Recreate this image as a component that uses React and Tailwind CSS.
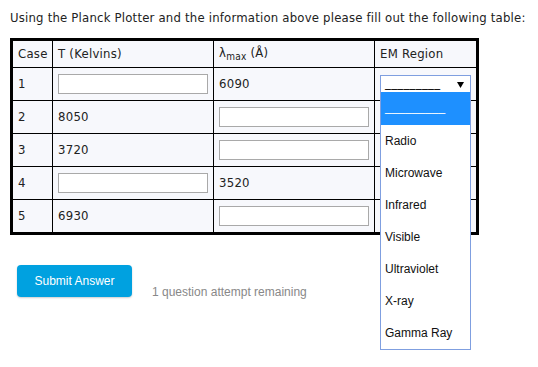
import React from "react";

const verdana = { fontFamily: '"DejaVu Sans Condensed", "DejaVu Sans", Verdana, sans-serif', fontStretch: "condensed" };

function Cell({ children, className = "" }) {
  return (
    <div className={"bg-[#f7f8fc] flex items-center pl-[5px] text-[13px] tracking-[0.25px] text-[#222] " + className}>
      {children}
    </div>
  );
}

function Input() {
  return <div className="w-[150px] h-[20px] bg-white border border-[#a9a9a9]" />;
}

export default function App() {
  const rows = [
    { c: "1", t: null, l: "6090" },
    { c: "2", t: "8050", l: null },
    { c: "3", t: "3720", l: null },
    { c: "4", t: null, l: "3520" },
    { c: "5", t: "6930", l: null },
  ];
  const options = ["Radio", "Microwave", "Infrared", "Visible", "Ultraviolet", "X-ray", "Gamma Ray"];
  return (
    <div className="w-[538px] h-[367px] bg-white relative overflow-hidden" style={verdana}>
      <div className="px-[10px] pt-[10px]">
        <div className="text-[13px] leading-[16px] tracking-[0.2px] text-[#222] whitespace-nowrap">
          Using the Planck Plotter and the information above please fill out the following table:
        </div>
        <div className="mt-[12px] w-[469px] border-[3px] border-black bg-black grid grid-cols-[39px_160px_160px_101px] grid-rows-[26px_repeat(5,32px)] gap-px">
          <Cell>Case</Cell>
          <Cell>T (Kelvins)</Cell>
          <Cell>
            <span className="relative top-[-1px]">
              λ<sub className="text-[10px] relative top-[3px] leading-none align-baseline">max</sub> (Å)
            </span>
          </Cell>
          <Cell>EM Region</Cell>
          {rows.map((r, i) => (
            <React.Fragment key={r.c}>
              <Cell>{r.c}</Cell>
              <Cell>{r.t === null ? <Input /> : r.t}</Cell>
              <Cell>{r.l === null ? <Input /> : r.l}</Cell>
              <Cell>
                {i === 0 ? (
                  <div className="w-[91px] h-[19px] bg-white border border-[#7f9fe0] relative flex items-center pl-[4px]">
                    <span className="text-[13px] tracking-[0.3px] leading-none text-black relative top-[-2px]">_________</span>
                    <svg className="absolute right-[6px] top-[6px]" width="7" height="6" viewBox="0 0 7 6">
                      <path d="M0 0 H7 L3.5 6 Z" fill="#000" />
                    </svg>
                  </div>
                ) : null}
              </Cell>
            </React.Fragment>
          ))}
        </div>
        <div className="flex items-start mt-[30px]" style={{ fontFamily: '"Liberation Sans", Arial, sans-serif', fontStretch: "normal" }}>
          <button className="ml-[7px] w-[115px] h-[32px] rounded-[4px] bg-[#00a1e0] text-white text-[12px] shadow-[0_1px_2px_rgba(0,0,0,0.2)]">
            Submit Answer
          </button>
          <div className="ml-[20px] mt-[20px] text-[12px] leading-[14px] text-[#888]">1 question attempt remaining</div>
        </div>
      </div>
      <div
        className="absolute left-[380px] top-[92px] w-[91px] bg-white border border-[#7f9fe0] border-t-0 text-[12px] text-[#111]"
        style={{ fontFamily: '"Liberation Sans", Arial, sans-serif', fontStretch: "normal" }}
      >
        <div className="h-[33px] bg-[#1e90ff] text-white pl-[4px] flex items-center">
          <span className="relative top-[-2px]">_________</span>
        </div>
        {options.map((o) => (
          <div key={o} className="h-[32px] pl-[4px] flex items-center">
            {o}
          </div>
        ))}
      </div>
    </div>
  );
}
